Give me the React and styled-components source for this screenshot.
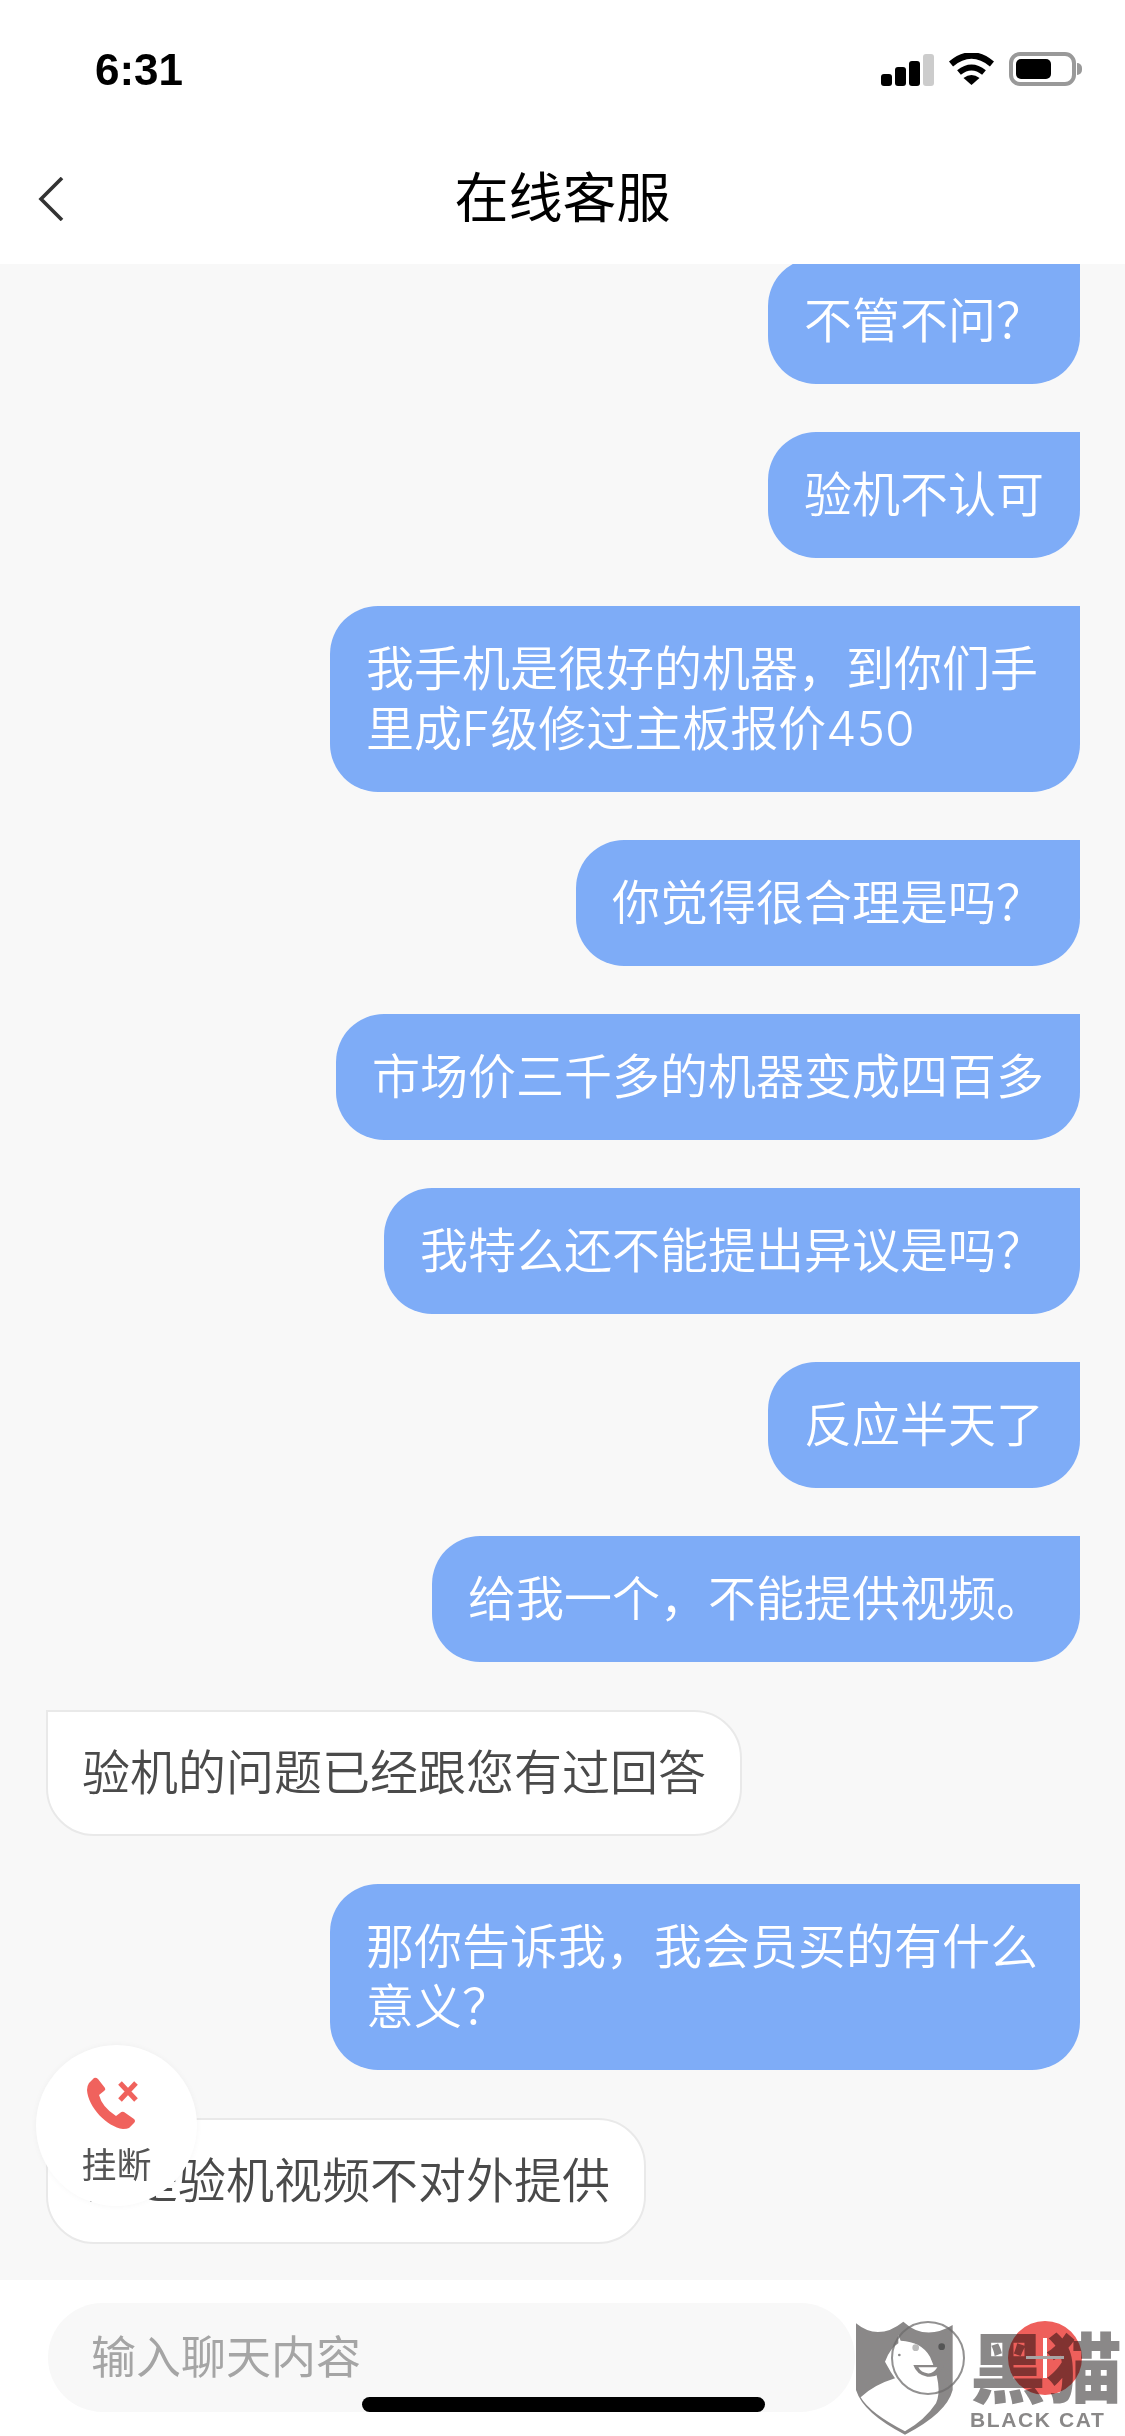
import React from "react";
import styled, { createGlobalStyle } from "styled-components";

const GlobalStyle = createGlobalStyle`
  html, body {
    margin: 0;
    padding: 0;
    background: #fff;
  }
  * {
    box-sizing: border-box;
  }
`;

const Root = styled.div`
  position: relative;
  width: 1125px;
  height: 2436px;
  display: flex;
  flex-direction: column;
  overflow: hidden;
  background: #fff;
  font-family: "Noto Sans CJK SC", "Noto Sans", sans-serif;
`;

const StatusBar = styled.div`
  height: 130px;
  flex-shrink: 0;
  display: flex;
  align-items: flex-start;
  justify-content: space-between;
  padding: 52px 49px 0 95px;
`;

const Time = styled.div`
  font-family: "Liberation Sans", Arial, sans-serif;
  font-size: 44px;
  font-weight: 700;
  line-height: 36px;
  color: #000;
`;

const StatusIcons = styled.div`
  display: flex;
  align-items: center;
  gap: 15px;
`;

const Signal = styled.div`
  display: flex;
  align-items: flex-end;
  gap: 3px;
  height: 33px;
`;

const SignalBar = styled.div`
  width: 11px;
  height: ${(p) => p.$h}px;
  border-radius: 3px;
  background: ${(p) => (p.$off ? "#ccc" : "#000")};
`;

const Battery = styled.div`
  position: relative;
  width: 67px;
  height: 34px;
  border: 4px solid #999;
  border-radius: 11px;
  padding: 3px;

  &::after {
    content: "";
    position: absolute;
    right: -10px;
    top: 7px;
    width: 5px;
    height: 12px;
    border-radius: 0 6px 6px 0;
    background: #999;
  }
`;

const BatteryFill = styled.div`
  width: 35px;
  height: 100%;
  border-radius: 5px;
  background: #000;
`;

const NavBar = styled.div`
  height: 134px;
  flex-shrink: 0;
  display: grid;
  grid-template-columns: 1fr auto 1fr;
  align-items: center;
  padding: 0 38px 5px;
`;

const BackIcon = styled.svg`
  display: block;
  margin-top: 9px;
`;

const Title = styled.div`
  font-size: 54px;
  line-height: 70px;
  color: #000;
`;

const ChatArea = styled.div`
  flex: 1;
  min-height: 0;
  display: flex;
  flex-direction: column;
  justify-content: flex-end;
  gap: 48px;
  overflow: hidden;
  padding: 0 45px 36px 46px;
  background: #f8f8f8;
`;

const Bubble = styled.div`
  flex-shrink: 0;
  max-width: 750px;
  font-family: Inter, "Noto Sans CJK SC", sans-serif;
  font-size: 48px;
  font-weight: 350;
  line-height: 60px;
  border-radius: 48px;
  align-self: ${(p) => (p.$mine ? "flex-end" : "flex-start")};
  color: ${(p) => (p.$mine ? "#fff" : "#4a4a4a")};
  background: ${(p) => (p.$mine ? "#7eacf7" : "#fff")};
  border: ${(p) => (p.$mine ? "none" : "2px solid #e9e9e9")};
  padding: ${(p) => (p.$mine ? "33px 36px" : "31px 34px")};
  ${(p) =>
    p.$mine ? "border-top-right-radius: 0;" : "border-top-left-radius: 0;"}
`;

const HangUp = styled.div`
  position: absolute;
  left: 36px;
  top: 2045px;
  width: 161px;
  height: 161px;
  border-radius: 50%;
  background: #fff;
  box-shadow: 0 0 6px rgba(0, 0, 0, 0.04);
  display: flex;
  flex-direction: column;
  align-items: center;
  padding-top: 32px;
`;

const HangUpIcon = styled.div`
  display: flex;
  margin-right: 8px;
`;

const HangUpLabel = styled.div`
  margin-top: 11px;
  font-size: 35px;
  line-height: 44px;
  color: #555;
`;

const Footer = styled.div`
  height: 156px;
  flex-shrink: 0;
  padding: 23px 270px 24px 48px;
  background: #fff;
`;

const InputBox = styled.div`
  height: 109px;
  border-radius: 55px;
  background: #f8f8f8;
  display: flex;
  align-items: center;
  padding: 0 0 6px 43px;
  font-size: 45px;
  color: #a5a5a5;
`;

const HomeIndicator = styled.div`
  position: absolute;
  left: 362px;
  bottom: 24px;
  width: 403px;
  height: 15px;
  border-radius: 8px;
  background: #000;
`;

const Watermark = styled.div`
  position: absolute;
  left: 850px;
  top: 2310px;
  width: 275px;
  height: 126px;
  display: flex;
`;

const WordMark = styled.div`
  position: relative;
  margin-left: -10px;
  display: flex;
  flex-direction: column;
  align-items: flex-start;
`;

const MarkName = styled.div`
  font-size: 76px;
  font-weight: 900;
  line-height: 92px;
  margin-top: 8px;
  color: #8a8888;
  white-space: nowrap;
`;

const MarkLatin = styled.div`
  font-family: "Liberation Sans", Arial, sans-serif;
  font-size: 21px;
  font-weight: 700;
  line-height: 20px;
  letter-spacing: 1.6px;
  color: #8a8888;
  white-space: nowrap;
`;

const RedDot = styled.div`
  position: absolute;
  left: 38px;
  top: 11px;
  width: 74px;
  height: 74px;
  border-radius: 50%;
  background: #ee5f5b;
  mix-blend-mode: multiply;
`;

const DotPlus = styled.div`
  position: absolute;
  left: 37px;
  top: 10px;
  width: 76px;
  height: 76px;

  &::before {
    content: "";
    position: absolute;
    left: 36px;
    top: 18px;
    width: 4px;
    height: 40px;
    background: #fff;
  }
  &::after {
    content: "";
    position: absolute;
    left: 19px;
    top: 36px;
    width: 38px;
    height: 3px;
    background: #a8a4a4;
  }
`;

function Chevron() {
  return (
    <BackIcon width="26" height="44" viewBox="0 0 26 44" fill="none">
      <path d="M24 1 L3 22 L24 43" stroke="#333" strokeWidth="3.6" />
    </BackIcon>
  );
}

function WifiIcon() {
  return (
    <svg width="45" height="32" viewBox="0 0 45 32">
      <path d="M2 11 Q22.5 -6 43 11" fill="none" stroke="#000" strokeWidth="6.5" />
      <path d="M10 19.5 Q22.5 9.5 35 19.5" fill="none" stroke="#000" strokeWidth="6" />
      <path d="M22.5 32 L14.5 25 Q22.5 19 30.5 25 Z" fill="#000" />
    </svg>
  );
}

function PhoneOffIcon() {
  return (
    <svg width="52" height="53" viewBox="0 0 52 53">
      <path
        d="M7 1 Q9 0 11 2 L18 11 Q19 13 17 14 L12 18 Q15 30 29 39 L33 36 Q35 34 37 35 L47 42 Q49 44 47 46 L42 51 Q40 52 36 52 C20 50 1 30 0 13 Q0 9 2 6 Z"
        fill="#f0625d"
      />
      <path d="M33 6 L49 23 M49 6 L33 23" stroke="#f0625d" strokeWidth="5" fill="none" />
    </svg>
  );
}

function ShieldLogo() {
  return (
    <svg width="130" height="126" viewBox="0 0 390 378" style={{ flexShrink: 0 }}>
      <path
        d="M18 40 Q85 95 160 35 Q225 95 308 45 L308 240 Q290 310 165 374 Q40 310 18 240 Z"
        fill="#8a8888"
      />
      <path
        d="M145 75 L152 92 Q215 95 240 140 Q280 230 258 280 Q225 330 165 364 Q60 310 32 262 Q70 225 135 205 L122 185 L105 155 Q120 115 145 100 Z"
        fill="#fff"
      />
      <circle cx="197" cy="113" r="10" fill="#bbb" />
      <circle cx="275" cy="110" r="10" fill="#555" />
      <path d="M190 165 H282 Q270 205 232 200 Q200 195 190 165 Z" fill="#8a8888" />
      <path d="M205 172 H262 Q250 192 232 190 Q214 188 205 172 Z" fill="#fff" />
      <circle cx="148" cy="135" r="4" fill="#8a8888" />
      <circle cx="234" cy="144" r="108" fill="none" stroke="#6e6c6c" strokeOpacity="0.75" strokeWidth="6" />
    </svg>
  );
}

const messages = [
  { mine: true, text: "不管不问？" },
  { mine: true, text: "验机不认可" },
  { mine: true, text: "我手机是很好的机器，到你们手里成F级修过主板报价450" },
  { mine: true, text: "你觉得很合理是吗？" },
  { mine: true, text: "市场价三千多的机器变成四百多" },
  { mine: true, text: "我特么还不能提出异议是吗？" },
  { mine: true, text: "反应半天了" },
  { mine: true, text: "给我一个，不能提供视频。" },
  { mine: false, text: "验机的问题已经跟您有过回答" },
  { mine: true, text: "那你告诉我，我会员买的有什么意义？" },
  { mine: false, text: "但是验机视频不对外提供" },
];

const signalBars = [12, 19, 25, 32];

export default function App() {
  return (
    <Root>
      <GlobalStyle />
      <StatusBar>
        <Time>6:31</Time>
        <StatusIcons>
          <Signal>
            {signalBars.map((h, i) => (
              <SignalBar key={h} $h={h} $off={i === 3} />
            ))}
          </Signal>
          <WifiIcon />
          <Battery>
            <BatteryFill />
          </Battery>
        </StatusIcons>
      </StatusBar>
      <NavBar>
        <Chevron />
        <Title>在线客服</Title>
      </NavBar>
      <ChatArea>
        {messages.map((m) => (
          <Bubble key={m.text} $mine={m.mine}>
            {m.text}
          </Bubble>
        ))}
      </ChatArea>
      <Footer>
        <InputBox>输入聊天内容</InputBox>
      </Footer>
      <HangUp>
        <HangUpIcon>
          <PhoneOffIcon />
        </HangUpIcon>
        <HangUpLabel>挂断</HangUpLabel>
      </HangUp>
      <HomeIndicator />
      <Watermark>
        <ShieldLogo />
        <WordMark>
          <MarkName>黑猫</MarkName>
          <MarkLatin>BLACK CAT</MarkLatin>
          <RedDot />
          <DotPlus />
        </WordMark>
      </Watermark>
    </Root>
  );
}
